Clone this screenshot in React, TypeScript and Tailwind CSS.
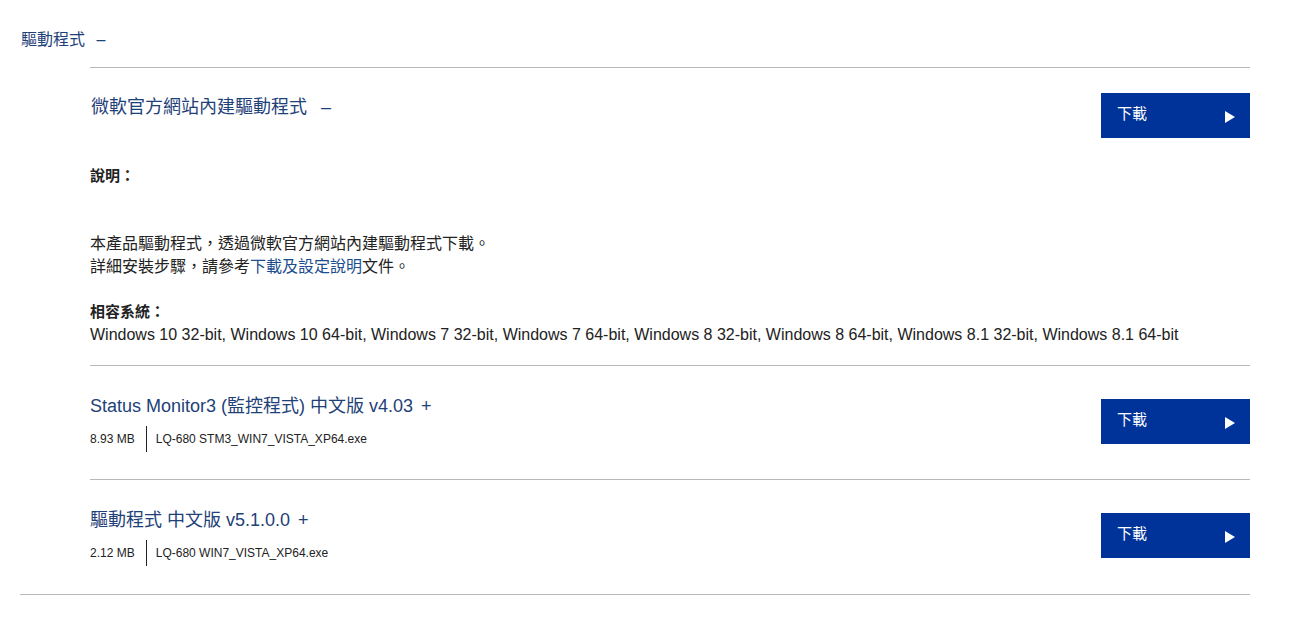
import React from 'react'

const font = { fontFamily: '"Liberation Sans", "Noto Sans CJK TC", Arial, sans-serif' }

function DownloadButton({ className = '' }: { className?: string }) {
  return (
    <a
      href="#"
      className={`flex h-[45px] w-[149px] shrink-0 items-center justify-between bg-[#003399] pl-[16px] pr-[15px] text-[15px] text-white ${className}`}
    >
      <span className="-mt-[2px]">下載</span>
      <svg width="10" height="12" viewBox="0 0 10 12" className="mt-[2px]">
        <path d="M0 0 L10 6 L0 12 Z" fill="#ffffff" />
      </svg>
    </a>
  )
}

function FileRow({ title, size, file }: { title: string; size: string; file: string }) {
  return (
    <div className="flex items-start justify-between border-t border-[#b8b8b8] pt-[28px] pb-[27px]">
      <div>
        <h3 className="text-[18px] leading-[24px] text-[#1e4178]">
          {title} <span className="ml-[3px]">+</span>
        </h3>
        <div className="mt-[8px] flex items-center text-[12px] text-[#222]">
          <span>{size}</span>
          <span className="ml-[11px] mr-[9px] h-[26px] w-px bg-[#222]" />
          <span>{file}</span>
        </div>
      </div>
      <DownloadButton className="mt-[5px]" />
    </div>
  )
}

export default function App() {
  return (
    <div className="min-h-screen bg-white" style={font}>
      <div className="ml-[20px] w-[1230px] pt-[30px]">
        <div className="pl-px text-[16px] leading-[20px] text-[#1e4178]">
          驅動程式 <span className="ml-[7px]">–</span>
        </div>

        <div className="ml-[70px] mt-[17px]">
          {/* built-in driver section */}
          <div className="flex items-start justify-between border-t border-[#b8b8b8] pt-[27px] pb-[19px]">
            <div className="min-w-0 flex-1 text-[#222]">
              <h3 className="pl-px text-[18px] leading-[24px] text-[#1e4178]">
                微軟官方網站內建驅動程式 <span className="ml-[9px]">–</span>
              </h3>
              <p className="mt-[47px] text-[15px] font-bold leading-[20px]">說明：</p>
              <div className="mt-[46px] text-[16px] leading-[23px]">
                <p>本產品驅動程式，透過微軟官方網站內建驅動程式下載。</p>
                <p>
                  詳細安裝步驟，請參考<a href="#" className="text-[#1b4d8f]">下載及設定說明</a>文件。
                </p>
              </div>
              <p className="mt-[23px] text-[15px] font-bold leading-[22px]">相容系統：</p>
              <p className="whitespace-nowrap text-[16px] leading-[23px]">
                Windows 10 32-bit, Windows 10 64-bit, Windows 7 32-bit, Windows 7 64-bit, Windows 8 32-bit, Windows 8 64-bit, Windows 8.1 32-bit, Windows 8.1 64-bit
              </p>
            </div>
            <DownloadButton className="-mt-[2px]" />
          </div>

          <FileRow
            title="Status Monitor3 (監控程式) 中文版 v4.03"
            size="8.93 MB"
            file="LQ-680 STM3_WIN7_VISTA_XP64.exe"
          />
          <FileRow title="驅動程式 中文版 v5.1.0.0" size="2.12 MB" file="LQ-680 WIN7_VISTA_XP64.exe" />
        </div>

        <div className="mt-px border-t border-[#b8b8b8]" />
      </div>
    </div>
  )
}
